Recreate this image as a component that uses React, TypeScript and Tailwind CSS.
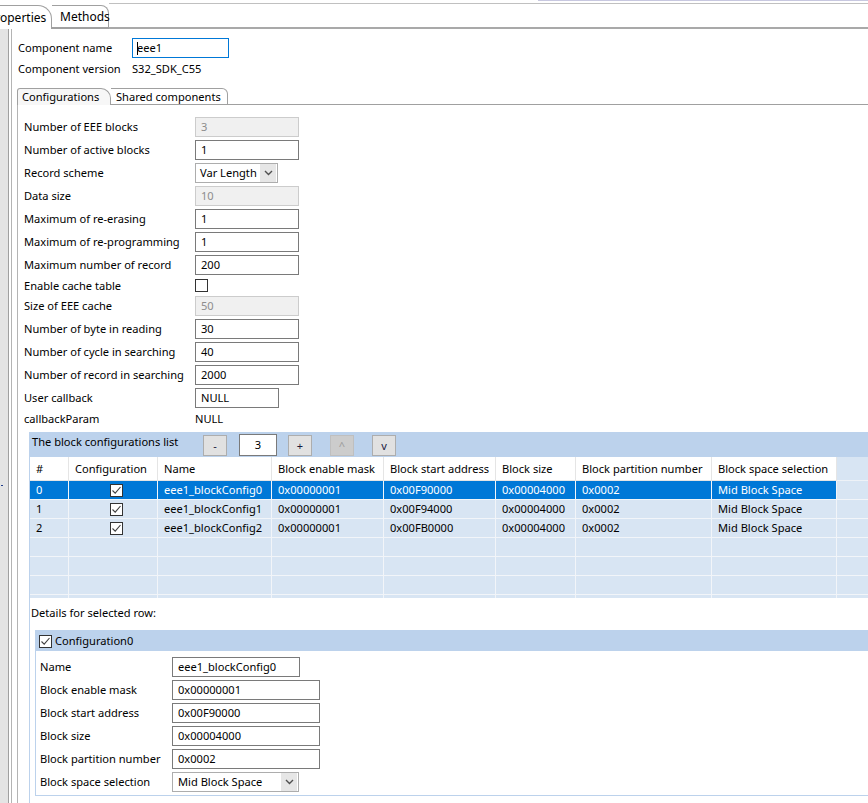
import React from 'react';

const font = "font-['Segoe_UI','Noto_Sans',sans-serif]";

const Check = ({ on = true }: { on?: boolean }) => (
  <div className="w-[13px] h-[13px] border border-[#333333] bg-white flex items-center justify-center shrink-0">
    {on && (
      <svg width="11" height="11" viewBox="0 0 11 11">
        <polyline points="1.5,5.5 4.2,8.2 9.5,2" fill="none" stroke="#404040" strokeWidth="1.1" />
      </svg>
    )}
  </div>
);

const Chevron = () => (
  <svg width="9" height="6" viewBox="0 0 9 6">
    <polyline points="1,1 4.5,4.5 8,1" fill="none" stroke="#505050" strokeWidth="1.4" />
  </svg>
);

const Box = ({ value, w, disabled }: { value: string; w: string; disabled?: boolean }) => (
  <div
    className={`${w} h-[20px] border flex items-center pl-[5px] ${
      disabled ? 'bg-[#f0f0f0] border-[#cccccc] text-[#8d8d8d]' : 'bg-white border-[#7a7a7a] text-black'
    }`}
  >
    {value}
  </div>
);

const Select = ({ value, w }: { value: string; w: string }) => (
  <div className={`${w} h-[20px] border border-[#adadad] bg-white flex items-center pl-[4px]`}>
    <span className="flex-1 whitespace-nowrap">{value}</span>
    <div className="w-[16px] h-[18px] bg-[#e6e6e6] flex items-center justify-center mr-[1px]">
      <Chevron />
    </div>
  </div>
);

type Row = { label: string; kind: 'box' | 'dis' | 'sel' | 'chk' | 'txt'; value?: string; w?: string };

const formRows: Row[] = [
  { label: 'Number of EEE blocks', kind: 'dis', value: '3' },
  { label: 'Number of active blocks', kind: 'box', value: '1' },
  { label: 'Record scheme', kind: 'sel', value: 'Var Length' },
  { label: 'Data size', kind: 'dis', value: '10' },
  { label: 'Maximum of re-erasing', kind: 'box', value: '1' },
  { label: 'Maximum of re-programming', kind: 'box', value: '1' },
  { label: 'Maximum number of record', kind: 'box', value: '200' },
  { label: 'Enable cache table', kind: 'chk' },
  { label: 'Size of EEE cache', kind: 'dis', value: '50' },
  { label: 'Number of byte in reading', kind: 'box', value: '30' },
  { label: 'Number of cycle in searching', kind: 'box', value: '40' },
  { label: 'Number of record in searching', kind: 'box', value: '2000' },
  { label: 'User callback', kind: 'box', value: 'NULL', w: 'w-[84px]' },
  { label: 'callbackParam', kind: 'txt', value: 'NULL' },
];

const cols = [
  { h: '#', w: 'w-[39px]' },
  { h: 'Configuration', w: 'w-[89px]' },
  { h: 'Name', w: 'w-[114px]' },
  { h: 'Block enable mask', w: 'w-[112px]' },
  { h: 'Block start address', w: 'w-[112px]' },
  { h: 'Block size', w: 'w-[80px]' },
  { h: 'Block partition number', w: 'w-[136px]' },
  { h: 'Block space selection', w: 'w-[125px]' },
];

const blocks = [
  ['0', '', 'eee1_blockConfig0', '0x00000001', '0x00F90000', '0x00004000', '0x0002', 'Mid Block Space'],
  ['1', '', 'eee1_blockConfig1', '0x00000001', '0x00F94000', '0x00004000', '0x0002', 'Mid Block Space'],
  ['2', '', 'eee1_blockConfig2', '0x00000001', '0x00FB0000', '0x00004000', '0x0002', 'Mid Block Space'],
];

const details: { label: string; value: string; w: string; sel?: boolean }[] = [
  { label: 'Name', value: 'eee1_blockConfig0', w: 'w-[128px]' },
  { label: 'Block enable mask', value: '0x00000001', w: 'w-[148px]' },
  { label: 'Block start address', value: '0x00F90000', w: 'w-[148px]' },
  { label: 'Block size', value: '0x00004000', w: 'w-[148px]' },
  { label: 'Block partition number', value: '0x0002', w: 'w-[148px]' },
  { label: 'Block space selection', value: 'Mid Block Space', w: 'w-[127px]', sel: true },
];

const SmallBtn = ({ t, disabled }: { t: string; disabled?: boolean }) => (
  <div
    className={`w-[24px] h-[21px] mt-[3px] border flex items-center justify-center text-[11px] ${
      disabled ? 'bg-[#cccccc] border-[#bfbfbf] text-[#9a9a9a]' : 'bg-[#e1e1e1] border-[#adadad] text-[#1a1a40]'
    }`}
  >
    {t}
  </div>
);

export default function App() {
  return (
    <div className={`w-[868px] h-[803px] overflow-hidden bg-white text-[11.1px] leading-none text-black ${font}`}>
      {/* top tab strip */}
      <div className="relative h-[29px] flex items-end overflow-hidden">
        <div className="h-[1px] w-[330px] ml-[538px] bg-[#c8c8e0] self-start" />
      </div>
      <div className="h-0 relative">
        <div className="absolute left-0 top-[-29px] w-[868px] h-[29px] flex items-end">
          <div className="h-[24px] w-[52px] border-t border-r border-[#a0a0a0] rounded-tr-[14px] bg-white overflow-hidden flex items-center">
            <span className="ml-[-12px] whitespace-nowrap text-[12px]">Properties</span>
          </div>
          <div className="h-[24px] w-[57px] border-t border-r border-b-2 border-[#a0a0a0] rounded-tr-[8px] bg-white flex items-center pl-[8px] text-[12px]">
            Methods
          </div>
          <div className="flex-1 h-[26px] border-t border-b-2 border-t-[#c0c0c0] border-b-[#a9a9a9]" />
        </div>
      </div>

      <div className="flex h-[774px]">
        {/* left strip */}
        <div className="w-[9px] shrink-0 bg-[#e4e4e4] border-r border-[#a0a0a0] flex flex-col">
          <div className="mt-[456px] ml-[1px] w-[2px] h-[1px] bg-[#1e3c8c]" />
        </div>
        <div className="w-[2px] shrink-0" />
        <div className="flex-1 border-l border-[#b4b4b4] pl-[5px] pt-[9px] flex flex-col">
          <div className="flex items-center h-[20px]">
            <div className="w-[115px] pl-[1px]">Component name</div>
            <div className="w-[97px] h-[20px] border border-[#0078d7] flex items-center pl-[4px]">
              <div className="w-[1px] h-[13px] bg-black" />
              <span className="ml-[-1px]">eee1</span>
            </div>
          </div>
          <div className="flex items-center h-[16px] mt-[3px]">
            <div className="w-[115px] pl-[1px]">Component version</div>
            <div>S32_SDK_C55</div>
          </div>

          {/* inner tabs */}
          <div className="flex items-end h-[17px] mt-[11px]">
            <div className="h-[17px] w-[94px] border-t border-l border-r border-[#a0a0a0] rounded-tl-[3px] rounded-tr-[10px] bg-[#f7f7f7] flex items-center pl-[4px] whitespace-nowrap">
              Configurations
            </div>
            <div className="h-[17px] w-[117px] border-t border-r border-b border-[#a0a0a0] rounded-tr-[6px] flex items-center pl-[5px] whitespace-nowrap">
              Shared components
            </div>
            <div className="flex-1 border-b border-[#a0a0a0]" />
          </div>

          <div className="flex-1 border-l border-[#b4b4b4] flex flex-col">
            <div className="pl-[5px] pt-[12px] flex flex-col gap-[3px]">
              {formRows.map((r) => (
                <div
                  key={r.label}
                  className={`flex items-center ${r.kind === 'chk' || r.kind === 'txt' ? 'h-[15px]' : 'h-[20px]'}`}
                >
                  <div className="w-[172px] pl-[1px] whitespace-nowrap">{r.label}</div>
                  {r.kind === 'box' && <Box value={r.value!} w={r.w ?? 'w-[104px]'} />}
                  {r.kind === 'dis' && <Box value={r.value!} w="w-[104px]" disabled />}
                  {r.kind === 'sel' && <Select value={r.value!} w="w-[83px]" />}
                  {r.kind === 'chk' && <Check on={false} />}
                  {r.kind === 'txt' && <div>{r.value}</div>}
                </div>
              ))}
            </div>

            {/* block configurations */}
            <div className="ml-[11px] mt-[6px] flex-1 border-l border-[#bcd2ec] flex flex-col">
              <div className="h-[25px] bg-[#bcd2ec] flex items-start">
                <div className="w-[173px] pl-[2px] pt-[4px] whitespace-nowrap">The block configurations list</div>
                <SmallBtn t="-" />
                <div className="w-[38px] h-[22px] mt-[2px] ml-[12px] border border-[#7a7a7a] bg-white flex items-center justify-center">
                  3
                </div>
                <div className="ml-[11px]">
                  <SmallBtn t="+" />
                </div>
                <div className="ml-[18px]">
                  <SmallBtn t="^" disabled />
                </div>
                <div className="ml-[18px]">
                  <SmallBtn t="v" />
                </div>
              </div>

              <div className="h-[141px] overflow-hidden bg-[#d8e5f3] flex flex-col">
                <div className="flex h-[24px] shrink-0">
                  {cols.map((c) => (
                    <div
                      key={c.h}
                      className={`${c.w} shrink-0 h-full bg-white border-r border-b border-[#e5e5e5] flex items-center pl-[6px] whitespace-nowrap`}
                    >
                      {c.h}
                    </div>
                  ))}
                  <div className="flex-1 border-b border-[#eef2f7]" />
                </div>
                {[0, 1, 2, 3, 4, 5, 6].map((i) => {
                  const row = blocks[i];
                  const sel = i === 0;
                  return (
                    <div key={i} className="flex h-[19px] shrink-0">
                      {cols.map((c, j) => (
                        <div
                          key={c.h}
                          className={`${c.w} shrink-0 h-full border-r border-b border-[#f2f5f9] flex items-center whitespace-nowrap ${
                            j === 1 ? 'justify-center pl-[7px]' : 'pl-[6px]'
                          } ${sel ? 'bg-[#0078d7] text-white' : ''}`}
                        >
                          {row && (j === 1 ? <Check /> : row[j])}
                        </div>
                      ))}
                      <div className="flex-1 h-full border-b border-[#f2f5f9]" />
                    </div>
                  );
                })}
              </div>

              <div className="mt-[7px] h-[16px] pl-[1px] flex items-center">Details for selected row:</div>

              {/* group */}
              <div className="ml-[5px] mt-[9px] border border-r-0 border-[#bcd2ec] pb-[3px]">
                <div className="h-[20px] bg-[#bcd2ec] flex items-center pl-[3px] gap-[3px]">
                  <Check />
                  <span>Configuration0</span>
                </div>
                <div className="pt-[6px] flex flex-col gap-[3px]">
                  {details.map((d) => (
                    <div key={d.label} className="flex items-center h-[20px]">
                      <div className="w-[136px] pl-[4px] whitespace-nowrap">{d.label}</div>
                      {d.sel ? (
                        <div className={`${d.w} h-[20px] border border-[#adadad] bg-white flex items-center pl-[5px]`}>
                          <span className="flex-1">{d.value}</span>
                          <div className="w-[16px] h-[18px] bg-[#e6e6e6] flex items-center justify-center mr-[1px]">
                            <Chevron />
                          </div>
                        </div>
                      ) : (
                        <Box value={d.value} w={d.w} />
                      )}
                    </div>
                  ))}
                </div>
              </div>
            </div>
          </div>
        </div>
      </div>
    </div>
  );
}
